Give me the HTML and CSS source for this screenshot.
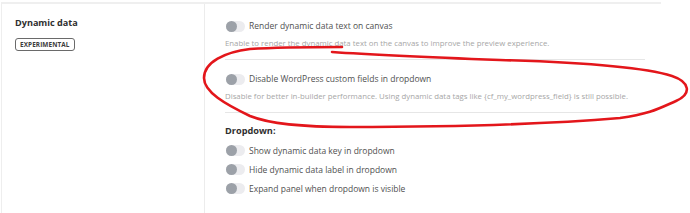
FILE: index.html
```html
<!DOCTYPE html>
<html>
<head>
<meta charset="utf-8">
<link rel="stylesheet" href="styles.css">
</head>
<body>
<div class="page">
  <div class="panel">
    <div class="side">
      <div class="title">Dynamic data</div>
      <span class="badge">EXPERIMENTAL</span>
    </div>
    <div class="main">
      <div class="item">
        <div class="row"><span class="toggle"></span><span class="label">Render dynamic data text on canvas</span></div>
        <div class="desc">Enable to render the dynamic data text on the canvas to improve the preview experience.</div>
      </div>
      <div class="item">
        <div class="row"><span class="toggle"></span><span class="label">Disable WordPress custom fields in dropdown</span></div>
        <div class="desc">Disable for better in-builder performance. Using dynamic data tags like {cf_my_wordpress_field} is still possible.</div>
      </div>
      <div class="group">
        <div class="heading">Dropdown:</div>
        <div class="row compact"><span class="toggle"></span><span class="label">Show dynamic data key in dropdown</span></div>
        <div class="row compact"><span class="toggle"></span><span class="label">Hide dynamic data label in dropdown</span></div>
        <div class="row compact"><span class="toggle"></span><span class="label">Expand panel when dropdown is visible</span></div>
      </div>
    </div>
  </div>
  <svg class="scribble" width="690" height="213" viewBox="0 0 690 213">
    <path d="M332 52 C360 54, 420 57, 500 60 C570 62, 640 66, 672 76 C690 82, 692 94, 676 101 C660 108, 650 114, 620 118 C560 123, 460 127, 350 127 C300 127, 270 124, 250 116 C225 104, 204 92, 204 78 C204 62, 225 52, 250 49 C280 47, 320 47, 342 47" fill="none" stroke="#e3161b" stroke-width="2.6" stroke-linecap="round" stroke-linejoin="round"/>
  </svg>
</div>
</body>
</html>
```
FILE: styles.css
```css
html, body {
  margin: 0;
  padding: 0;
  background: #fff;
}
body {
  font-family: "Open Sans", "Noto Sans", sans-serif;
  width: 690px;
  height: 213px;
  overflow: hidden;
}
.page {
  position: relative;
  width: 690px;
  height: 213px;
  padding-top: 2px;
  box-sizing: border-box;
}
.panel {
  display: flex;
  width: 660px;
  height: 211px;
  margin-left: 1px;
  border-top: 2px solid #efefef;
  border-left: 1px solid #eeeeee;
  box-sizing: border-box;
}
.side {
  width: 203px;
  flex: none;
  border-right: 1px solid #ececec;
  padding: 12px 0 0 13px;
  box-sizing: border-box;
}
.title {
  font-size: 9.1px;
  font-weight: 700;
  line-height: 14px;
  color: #2f2f2f;
}
.badge {
  display: inline-block;
  margin-top: 8px;
  padding: 1px 4px;
  border: 1px solid #6a6a6a;
  border-radius: 3px;
  font-size: 6.4px;
  font-weight: 700;
  line-height: 9px;
  color: #3c3c3c;
  letter-spacing: 0.1px;
}
.main {
  flex: 1;
  padding: 3px 0 0 20px;
}
.item {
  width: 420px;
  padding: 11px 0 10px;
  border-bottom: 1px solid #e6e6e6;
}
.row {
  display: flex;
  align-items: center;
  height: 16px;
}
.row.compact {
  height: 19px;
}
.toggle {
  position: relative;
  flex: none;
  width: 19px;
  height: 11px;
  border-radius: 6px;
  background: #ececef;
  margin: 0 4px 0 1px;
}
.toggle::after {
  content: "";
  position: absolute;
  left: 0;
  top: 0;
  width: 11px;
  height: 11px;
  border-radius: 50%;
  background: #9ca1a8;
}
.label {
  font-size: 8.5px;
  color: #505050;
  line-height: 16px;
}
.desc {
  margin-top: 3px;
  font-size: 7.8px;
  line-height: 12px;
  color: #a6a6a6;
}
.group {
  padding-top: 11px;
}
.heading {
  font-size: 9.2px;
  font-weight: 700;
  line-height: 14px;
  color: #2f2f2f;
  margin-bottom: 3px;
}
.scribble {
  position: absolute;
  left: 0;
  top: 0;
  pointer-events: none;
}
```
